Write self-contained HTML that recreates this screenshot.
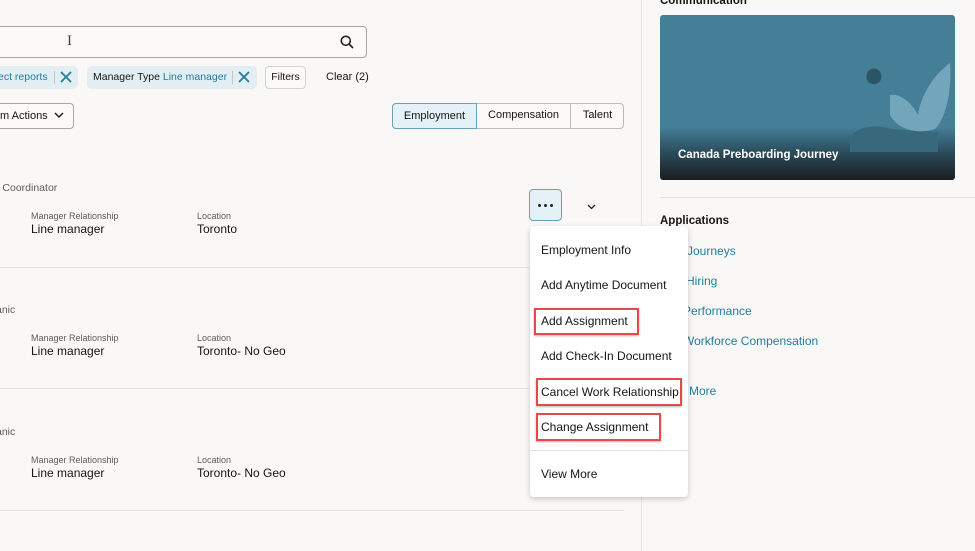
<!DOCTYPE html>
<html><head><style>
*{box-sizing:border-box;margin:0;padding:0}
body{width:975px;height:551px;overflow:hidden;background:#f9f8f6;font-family:"Liberation Sans",sans-serif;color:#161513;position:relative}
.a{position:absolute;white-space:nowrap}
.lbl{font-size:9px;color:#5f5d5a}
.val{font-size:12px;color:#161513}
.sep{position:absolute;left:0;width:624px;height:1px;background:#e4e2de}
.chip{position:absolute;top:66px;height:23px;background:#e2eef2;border-radius:5px;font-size:10.5px;line-height:23px}
.lnk{color:#227e9e;font-size:12px}
.mi{position:absolute;left:541px;font-size:12px;color:#161513}
.red{position:absolute;border:2px solid #e5484d;box-shadow:0 1px 2px rgba(0,0,0,.3)}
</style></head><body>
<div class="a" style="left:-5px;top:26px;width:372px;height:32px;border:1px solid #a8a6a2;border-radius:4px;background:#fbfaf9"></div>
<div class="a" style="left:67px;top:33px;font-size:15px;color:#444;font-family:'Liberation Serif',serif">I</div>
<svg class="a" style="left:340px;top:35px" width="14" height="14" viewBox="0 0 14 14"><circle cx="5.8" cy="5.8" r="4.5" fill="none" stroke="#222" stroke-width="1.6"/><path d="M9 9l4 4" stroke="#222" stroke-width="1.7"/></svg>
<div class="chip" style="left:-10px;width:88px"><span style="position:absolute;left:8px;color:#227e9e">ect reports</span><span style="position:absolute;left:64px;top:5px;width:1px;height:13px;background:#b8c8cd"></span><svg style="position:absolute;left:70px;top:5px" width="12" height="12"><path d="M1 1l10 10M11 1L1 11" stroke="#227e9e" stroke-width="1.8"/></svg></div>
<div class="chip" style="left:87px;width:170px"><span style="position:absolute;left:6px">Manager Type <span style="color:#227e9e">Line manager</span></span><span style="position:absolute;left:145px;top:5px;width:1px;height:13px;background:#b8c8cd"></span><svg style="position:absolute;left:151px;top:5px" width="12" height="12"><path d="M1 1l10 10M11 1L1 11" stroke="#227e9e" stroke-width="1.8"/></svg></div>
<div class="a" style="left:265px;top:66px;width:41px;height:23px;border:1px solid #d6d4d0;border-radius:4px;background:#fbfaf9;font-size:10.5px;line-height:21px;text-align:center">Filters</div>
<div class="a" style="left:326px;top:71px;font-size:11px">Clear (2)</div>
<div class="a" style="left:-5px;top:103px;width:79px;height:26px;border:1px solid #a8a6a2;border-radius:4px;background:#fbfaf9"></div>
<div class="a" style="left:0;top:110px;font-size:11px">m Actions</div>
<svg class="a" style="left:54px;top:112px" width="10" height="7"><path d="M1 1l4 4 4-4" fill="none" stroke="#222" stroke-width="1.5"/></svg>
<div class="a" style="left:392px;top:103px;width:232px;height:26px;border:1px solid #bdbbb7;border-radius:4px;background:#fbfaf9"></div>
<div class="a" style="left:392px;top:103px;width:85px;height:26px;border:1px solid #6aa3b8;border-radius:4px 0 0 4px;background:#e4f1f6;font-size:11px;line-height:24px;text-align:center">Employment</div>
<div class="a" style="left:477px;top:109px;width:93px;font-size:11px;text-align:center">Compensation</div>
<div class="a" style="left:570px;top:104px;width:1px;height:24px;background:#bdbbb7"></div>
<div class="a" style="left:571px;top:109px;width:53px;font-size:11px;text-align:center">Talent</div>
<div class="a" style="left:-4px;top:182px;font-size:10.5px;color:#5f5d5a">- Coordinator</div>
<div class="a lbl" style="left:31px;top:211px">Manager Relationship</div><div class="a val" style="left:31px;top:222px">Line manager</div>
<div class="a lbl" style="left:197px;top:211px">Location</div><div class="a val" style="left:197px;top:222px">Toronto</div>
<div class="a" style="left:529px;top:189px;width:33px;height:32px;border:1px solid #6aa3b8;border-radius:4px;background:#e4f1f6"></div>
<div class="a" style="left:538px;top:204px;width:3px;height:3px;background:#222;border-radius:50%"></div>
<div class="a" style="left:544px;top:204px;width:3px;height:3px;background:#222;border-radius:50%"></div>
<div class="a" style="left:550px;top:204px;width:3px;height:3px;background:#222;border-radius:50%"></div>
<svg class="a" style="left:587px;top:204px" width="9" height="6"><path d="M1 1l3.5 3.5L8 1" fill="none" stroke="#222" stroke-width="1.3"/></svg>
<div class="sep" style="top:267px"></div>
<div class="a" style="left:-4px;top:304px;font-size:10.5px;color:#5f5d5a">anic</div>
<div class="a lbl" style="left:31px;top:333px">Manager Relationship</div><div class="a val" style="left:31px;top:344px">Line manager</div>
<div class="a lbl" style="left:197px;top:333px">Location</div><div class="a val" style="left:197px;top:344px">Toronto- No Geo</div>
<div class="sep" style="top:388px"></div>
<div class="a" style="left:-4px;top:426px;font-size:10.5px;color:#5f5d5a">anic</div>
<div class="a lbl" style="left:31px;top:455px">Manager Relationship</div><div class="a val" style="left:31px;top:466px">Line manager</div>
<div class="a lbl" style="left:197px;top:455px">Location</div><div class="a val" style="left:197px;top:466px">Toronto- No Geo</div>
<div class="sep" style="top:510px"></div>
<div class="a" style="left:641px;top:0;width:1px;height:551px;background:#e4e2de"></div>
<div class="a" style="left:660px;top:-5px;font-size:11.5px;font-weight:bold">Communication</div>
<div class="a" style="left:660px;top:15px;width:295px;height:165px;border-radius:3px;overflow:hidden;background:linear-gradient(#457f97 0,#457f97 68%,#2c5060 82%,#1a1d1f 100%)">
<svg style="position:absolute;left:0;top:0" width="295" height="165"><path d="M207 58c3-6 12-6 14 1 2 6-3 11-8 10-5 0-8-6-6-11z" fill="#2c5566"/><path d="M190 125c4-12 20-16 38-12 14 3 28 2 50 4l0 20H190z" fill="#37687c"/><path d="M230 80c10-2 22 8 28 20 3-22 18-42 32-52 2 28-4 55-15 66-18 6-38 0-45-14z" fill="#7fb0c4" opacity=".8"/></svg>
<div style="position:absolute;left:18px;top:134px;color:#fff;font-size:11.5px;font-weight:bold">Canada Preboarding Journey</div></div>
<div class="a" style="left:660px;top:197px;width:315px;height:1px;background:#e4e2de"></div>
<div class="a" style="left:660px;top:215px;font-size:11.5px;font-weight:bold">Applications</div>
<div class="a lnk" style="left:687px;top:244px">Journeys</div>
<div class="a lnk" style="left:686px;top:274px">Hiring</div>
<div class="a lnk" style="left:683px;top:304px">Performance</div>
<div class="a lnk" style="left:683px;top:334px">Workforce Compensation</div>
<div class="a lnk" style="left:689px;top:384px">More</div>
<div class="a" style="left:530px;top:226px;width:158px;height:271px;background:#fff;border-radius:4px;box-shadow:0 2px 6px rgba(0,0,0,.2)"></div>
<div class="mi" style="top:243px">Employment Info</div>
<div class="mi" style="top:278px">Add Anytime Document</div>
<div class="mi" style="top:314px">Add Assignment</div>
<div class="mi" style="top:349px">Add Check-In Document</div>
<div class="mi" style="top:385px">Cancel Work Relationship</div>
<div class="mi" style="top:420px">Change Assignment</div>
<div class="a" style="left:530px;top:450px;width:158px;height:1px;background:#e4e2de"></div>
<div class="mi" style="top:467px">View More</div>
<div class="red" style="left:534px;top:308px;width:105px;height:27px"></div>
<div class="red" style="left:536px;top:378px;width:146px;height:28px"></div>
<div class="red" style="left:536px;top:413px;width:125px;height:28px"></div>
</body></html>
